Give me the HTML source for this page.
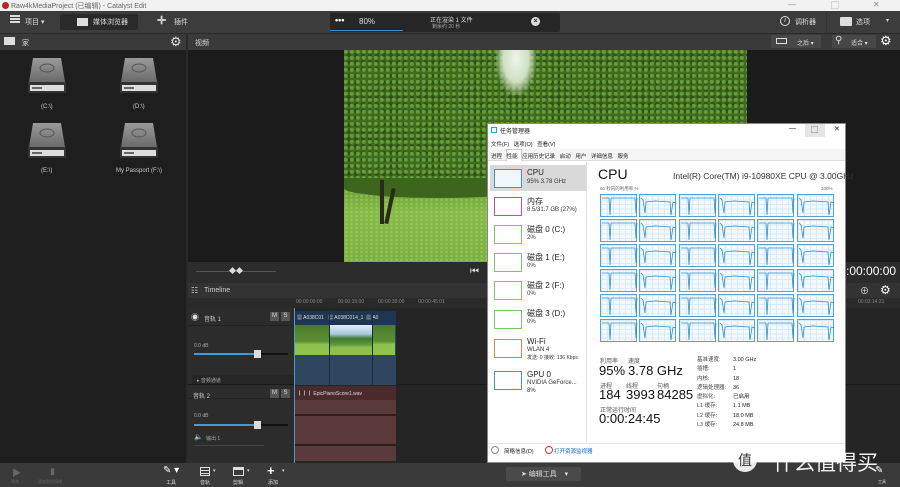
<!DOCTYPE html>
<html><head><meta charset="utf-8"><style>
*{margin:0;padding:0;box-sizing:border-box}
body{width:900px;height:487px;overflow:hidden;background:#1e1e1e;font-family:"Liberation Sans","Noto Sans CJK SC",sans-serif;color:#ccc;position:relative;font-size:7px}
.a{position:absolute}
.tm{color:#222}
.cell{position:absolute;width:37px;height:23px;border:1px solid #4fa3d8;background:#f3f9fd;background-image:linear-gradient(#d8ebf7 1px,transparent 1px),linear-gradient(90deg,#d8ebf7 1px,transparent 1px);background-size:6px 4.5px}
.cell svg{position:absolute;left:0;top:0}
.li{position:absolute;left:494px;width:28px;height:19px;border:1px solid}
.lt{position:absolute;left:527px;font-size:8px;color:#222}
.ls{position:absolute;left:527px;font-size:6px;color:#333}
.sl{position:absolute;font-size:6px;color:#555}
.sv{position:absolute;font-size:13px;color:#111}
</style></head><body>
<!-- title bar -->
<div class="a" style="left:0;top:0;width:900px;height:11px;background:#f2f2f2"></div>
<div class="a" style="left:2px;top:2px;width:7px;height:7px;border-radius:50%;background:#b0282a"></div>
<div class="a" style="left:11px;top:1px;font-size:7px;color:#666">Raw4kMediaProject (已编辑) - Catalyst Edit</div>
<div class="a" style="left:788px;top:0;font-size:8px;color:#888">—</div>
<div class="a" style="left:831px;top:0;font-size:8px;color:#888">▢</div>
<div class="a" style="left:873px;top:0;font-size:8px;color:#888">✕</div>
<!-- toolbar -->
<div class="a" style="left:0;top:11px;width:900px;height:22px;background:#3c3c3c"></div>
<div class="a" style="left:10px;top:15px;width:10px;height:2px;background:#ddd;box-shadow:0 3px 0 #ddd,0 6px 0 #ddd"></div>
<div class="a" style="left:25px;top:17px;font-size:7px;color:#ddd">项目 ▾</div>
<div class="a" style="left:60px;top:14px;width:78px;height:16px;background:#2a2a2a;border-radius:2px"></div>
<div class="a" style="left:77px;top:18px;width:11px;height:8px;background:#ddd"></div>
<div class="a" style="left:93px;top:17px;font-size:7px;color:#ddd">媒体浏览器</div>
<div class="a" style="left:157px;top:14px;font-size:11px;color:#ddd;font-weight:bold">✛</div>
<div class="a" style="left:174px;top:17px;font-size:7px;color:#ddd">插件</div>
<div class="a" style="left:330px;top:13px;width:230px;height:19px;background:#262626;border-radius:2px"></div>
<div class="a" style="left:330px;top:30px;width:73px;height:1px;background:#3a8fc4"></div>
<div class="a" style="left:335px;top:15px;font-size:9px;color:#fff;font-weight:bold">•••</div>
<div class="a" style="left:359px;top:17px;font-size:8px;color:#ddd">80%</div>
<div class="a" style="left:430px;top:15px;font-size:6px;color:#ddd">正在渲染 1 文件</div>
<div class="a" style="left:432px;top:23px;font-size:5px;color:#aaa">剩余约 20 秒</div>
<div class="a" style="left:531px;top:17px;width:9px;height:9px;border-radius:50%;background:#ddd;color:#222;font-size:7px;line-height:9px;text-align:center;font-weight:bold">×</div>
<div class="a" style="left:780px;top:16px;width:10px;height:10px;border-radius:50%;border:1px solid #ddd;color:#ddd;font-size:7px;line-height:8px;text-align:center;font-style:italic">i</div>
<div class="a" style="left:795px;top:17px;font-size:7px;color:#ddd">调析器</div>
<div class="a" style="left:826px;top:11px;width:1px;height:22px;background:#333"></div>
<div class="a" style="left:840px;top:17px;width:12px;height:9px;background:#ddd;border-radius:1px"></div>
<div class="a" style="left:856px;top:17px;font-size:7px;color:#ddd">选项</div>
<div class="a" style="left:886px;top:17px;font-size:6px;color:#ddd">▾</div>
<!-- panel headers -->
<div class="a" style="left:0;top:33px;width:900px;height:17px;background:#3a3a3a;border-top:1px solid #2a2a2a"></div>
<div class="a" style="left:186px;top:33px;width:2px;height:430px;background:#2a2a2a"></div>
<div class="a" style="left:4px;top:37px;width:11px;height:8px;background:#ddd"></div>
<div class="a" style="left:22px;top:38px;font-size:7px;color:#ddd">家</div>
<div class="a" style="left:170px;top:34px;font-size:13px;color:#ddd">⚙</div>
<div class="a" style="left:195px;top:38px;font-size:7px;color:#ddd">视频</div>
<div class="a" style="left:771px;top:35px;width:50px;height:13px;background:#474747"></div>
<div class="a" style="left:776px;top:38px;width:11px;height:6px;border:1px solid #ddd"></div>
<div class="a" style="left:797px;top:38px;font-size:6px;color:#ddd">之后 ▾</div>
<div class="a" style="left:832px;top:35px;width:44px;height:13px;background:#474747"></div>
<div class="a" style="left:835px;top:35px;font-size:10px;color:#ddd">⚲</div>
<div class="a" style="left:851px;top:38px;font-size:6px;color:#ddd">适合 ▾</div>
<div class="a" style="left:880px;top:33px;font-size:13px;color:#fff">⚙</div>
<!-- drives -->
<svg class="a" style="left:0;top:50px" width="186" height="130">
 <defs><linearGradient id="dg" x1="0" y1="0" x2="0" y2="1"><stop offset="0" stop-color="#9a9a9a"/><stop offset="1" stop-color="#6a6a6a"/></linearGradient></defs>
 <g id="d"><path d="M33 8 H61 L65 32 H29 Z" fill="url(#dg)"/><ellipse cx="47" cy="18" rx="7" ry="4" fill="none" stroke="#555" stroke-width="1"/><rect x="28" y="32" width="38" height="11" fill="#333"/><rect x="30" y="35" width="34" height="6" fill="#ddd"/><rect x="32" y="37" width="10" height="2" fill="#666"/></g>
 <use href="#d" x="92"/><use href="#d" y="65"/><use href="#d" x="92" y="65"/>
</svg>
<div class="a" style="left:41px;top:104px;font-size:6px;color:#ccc">(C:\)</div>
<div class="a" style="left:133px;top:104px;font-size:6px;color:#ccc">(D:\)</div>
<div class="a" style="left:41px;top:168px;font-size:6px;color:#ccc">(E:\)</div>
<div class="a" style="left:116px;top:168px;font-size:6px;color:#ccc">My Passport (F:\)</div>
<!-- video -->
<div class="a" style="left:188px;top:50px;width:712px;height:212px;background:#1b1b1b"></div>
<div class="a" style="left:344px;top:50px;width:403px;height:212px;overflow:hidden;background:#3f6c1e">
 <div class="a" style="left:0;top:0;width:403px;height:150px;background-image:radial-gradient(circle at 30% 30%,#6a9d3c 0 1.5px,transparent 2.5px),radial-gradient(circle at 70% 70%,#2d5214 0 1.5px,transparent 2.5px);background-size:6px 6px,7px 7px"></div>
 <div class="a" style="left:152px;top:0;width:40px;height:45px;background:radial-gradient(ellipse at 50% 20%,#eef3ea 0,#cfe0c3 45%,rgba(90,140,60,0) 75%)"></div>
 <div class="a" style="left:0;top:140px;width:403px;height:72px;background:linear-gradient(#6fa33a,#86bb48 30%,#7cb143)"></div>
 <div class="a" style="left:0;top:140px;width:403px;height:72px;background-image:radial-gradient(circle,#a2cf62 0 1px,transparent 1.5px);background-size:5px 4px;opacity:.6"></div>
 <div class="a" style="left:0;top:128px;width:190px;height:20px;background:#3b661c;border-radius:0 0 50% 50%"></div>
 <div class="a" style="left:36px;top:130px;width:4px;height:44px;background:#2b2a1a"></div>
 <div class="a" style="left:44px;top:138px;width:4px;height:36px;background:#2b2a1a;transform:rotate(12deg)"></div>
</div>
<!-- transport -->
<div class="a" style="left:188px;top:262px;width:712px;height:21px;background:#2c2c2c"></div>
<div class="a" style="left:196px;top:271px;width:80px;height:1px;background:#555"></div>
<div class="a" style="left:229px;top:266px;font-size:7px;color:#ddd">◆◆</div>
<div class="a" style="left:470px;top:266px;font-size:10px;color:#ddd">⏮</div>
<div class="a" style="left:846px;top:264px;font-size:12px;color:#fff">:00:00:00</div>
<!-- timeline header -->
<div class="a" style="left:188px;top:283px;width:712px;height:15px;background:#333"></div>
<div class="a" style="left:191px;top:286px;font-size:8px;color:#ccc">☷</div>
<div class="a" style="left:204px;top:287px;font-size:7px;color:#ccc">Timeline</div>
<div class="a" style="left:860px;top:284px;font-size:9px;color:#ddd">⊕</div>
<div class="a" style="left:880px;top:283px;font-size:12px;color:#fff">⚙</div>
<div class="a" style="left:188px;top:298px;width:712px;height:10px;background:#2a2a2a"></div>
<div class="a" style="left:296px;top:299px;font-size:5px;color:#888;white-space:nowrap">00:00:00:00 &nbsp;&nbsp;&nbsp;&nbsp;&nbsp;&nbsp;&nbsp;&nbsp;&nbsp; 00:00:15:00 &nbsp;&nbsp;&nbsp;&nbsp;&nbsp;&nbsp;&nbsp;&nbsp; 00:00:30:00 &nbsp;&nbsp;&nbsp;&nbsp;&nbsp;&nbsp;&nbsp;&nbsp; 00:00:45:01</div>
<div class="a" style="left:858px;top:299px;font-size:5px;color:#888">00:03:14:21</div>
<!-- tracks -->
<div class="a" style="left:188px;top:308px;width:106px;height:155px;background:#2c2c2c"></div>
<div class="a" style="left:294px;top:308px;width:606px;height:155px;background:#252525"></div>
<div class="a" style="left:188px;top:384px;width:712px;height:1px;background:#1a1a1a"></div>
<div class="a" style="left:188px;top:325px;width:106px;height:1px;background:#222"></div>
<div class="a" style="left:188px;top:398px;width:106px;height:1px;background:#222"></div>
<div class="a" style="left:191px;top:312px;font-size:8px;color:#ddd">◉</div>
<div class="a" style="left:204px;top:314px;font-size:6px;color:#ccc">音轨 1</div>
<div class="a" style="left:270px;top:312px;width:9px;height:9px;background:#555;color:#ddd;font-size:6px;text-align:center;line-height:9px">M</div>
<div class="a" style="left:281px;top:312px;width:9px;height:9px;background:#555;color:#ddd;font-size:6px;text-align:center;line-height:9px">S</div>
<div class="a" style="left:194px;top:343px;font-size:5px;color:#aaa">0.0 dB</div>
<div class="a" style="left:194px;top:353px;width:64px;height:2px;background:#3a9be0"></div>
<div class="a" style="left:258px;top:353px;width:30px;height:2px;background:#111"></div>
<div class="a" style="left:254px;top:350px;width:7px;height:8px;background:#ddd"></div>
<div class="a" style="left:192px;top:375px;width:102px;height:9px;background:#262626"></div>
<div class="a" style="left:197px;top:377px;font-size:5px;color:#aaa">▸ 音频通道</div>
<div class="a" style="left:193px;top:391px;font-size:6px;color:#ccc">音轨 2</div>
<div class="a" style="left:270px;top:389px;width:9px;height:9px;background:#555;color:#ddd;font-size:6px;text-align:center;line-height:9px">M</div>
<div class="a" style="left:281px;top:389px;width:9px;height:9px;background:#555;color:#ddd;font-size:6px;text-align:center;line-height:9px">S</div>
<div class="a" style="left:194px;top:413px;font-size:5px;color:#aaa">0.0 dB</div>
<div class="a" style="left:194px;top:424px;width:64px;height:2px;background:#3a9be0"></div>
<div class="a" style="left:258px;top:424px;width:30px;height:2px;background:#111"></div>
<div class="a" style="left:254px;top:421px;width:7px;height:8px;background:#ddd"></div>
<div class="a" style="left:194px;top:433px;font-size:7px;color:#ddd">🔈</div>
<div class="a" style="left:206px;top:435px;font-size:5px;color:#aaa">输出 1</div>
<div class="a" style="left:194px;top:445px;width:70px;height:1px;background:#444"></div>
<!-- video clips -->
<div class="a" style="left:294px;top:308px;width:1px;height:155px;background:#4a9ad0"></div>
<div class="a" style="left:295px;top:311px;width:101px;height:74px;background:#2e465e"></div>
<div class="a" style="left:295px;top:311px;width:101px;height:14px;background:#1f3650"></div>
<div class="a" style="left:297px;top:314px;font-size:5px;color:#ddd;white-space:nowrap">▦ A038C01 &nbsp; ▦ A038C014_1 &nbsp;▦ A0</div>
<div class="a" style="left:295px;top:325px;width:34px;height:30px;background:linear-gradient(#4a7c28 0%,#5b8f34 55%,#8fc24e 65%)"></div>
<div class="a" style="left:330px;top:325px;width:42px;height:30px;background:linear-gradient(#dfeef8 0%,#a9c9e2 30%,#3f7a2c 45%,#5e963a 65%,#8fbf4e 75%)"></div>
<div class="a" style="left:373px;top:325px;width:22px;height:30px;background:linear-gradient(#4a7c28 0%,#5b8f34 55%,#8fc24e 65%)"></div>
<div class="a" style="left:329px;top:311px;width:1px;height:74px;background:#1a2a3a"></div>
<div class="a" style="left:372px;top:311px;width:1px;height:74px;background:#1a2a3a"></div>
<!-- audio clip -->
<div class="a" style="left:295px;top:386px;width:101px;height:75px;background:#5a3a3a"></div>
<div class="a" style="left:295px;top:386px;width:101px;height:14px;background:#4a2a2a"></div>
<div class="a" style="left:297px;top:390px;font-size:5px;color:#ddd">┃┃┃ EpicPianoScore1.wav</div>
<div class="a" style="left:295px;top:414px;width:101px;height:2px;background:#2f1c1c"></div>
<div class="a" style="left:295px;top:444px;width:101px;height:2px;background:#2f1c1c"></div>
<!-- bottom toolbar -->
<div class="a" style="left:0;top:463px;width:900px;height:24px;background:#3a3a3a"></div>
<div class="a" style="left:12px;top:466px;font-size:9px;color:#666">▶</div>
<div class="a" style="left:11px;top:479px;font-size:4px;color:#666">预览</div>
<div class="a" style="left:50px;top:466px;font-size:9px;color:#666">▮</div>
<div class="a" style="left:38px;top:479px;font-size:4px;color:#666">添加到时间线</div>
<div class="a" style="left:163px;top:465px;font-size:10px;color:#fff">✎ ▾</div>
<div class="a" style="left:166px;top:479px;font-size:5px;color:#ddd">工具</div>
<div class="a" style="left:200px;top:467px;width:10px;height:9px;border:1px solid #ddd;background:repeating-linear-gradient(#3a3a3a 0 2px,#ddd 2px 3px)"></div>
<div class="a" style="left:213px;top:468px;font-size:5px;color:#ddd">▾</div>
<div class="a" style="left:200px;top:479px;font-size:5px;color:#ddd">音轨</div>
<div class="a" style="left:233px;top:467px;width:11px;height:9px;border:1px solid #ddd;border-top:3px solid #ddd"></div>
<div class="a" style="left:247px;top:468px;font-size:5px;color:#ddd">▾</div>
<div class="a" style="left:233px;top:479px;font-size:5px;color:#ddd">剪辑</div>
<div class="a" style="left:267px;top:463px;font-size:13px;color:#fff;font-weight:bold">+</div>
<div class="a" style="left:282px;top:468px;font-size:5px;color:#ddd">▾</div>
<div class="a" style="left:268px;top:479px;font-size:5px;color:#ddd">添加</div>
<div class="a" style="left:506px;top:467px;width:75px;height:14px;background:#4a4a4a;border-radius:2px"></div>
<div class="a" style="left:521px;top:469px;font-size:7px;color:#ddd">➤ 编辑工具 &nbsp;&nbsp;&nbsp;▾</div>
<div class="a" style="left:875px;top:465px;font-size:10px;color:#fff">✎</div>
<div class="a" style="left:878px;top:479px;font-size:4px;color:#ddd">工具</div>
<!-- task manager -->
<div class="a" style="left:487px;top:123px;width:359px;height:340px;background:#fff;border:1px solid #888"></div>
<div class="a" style="left:491px;top:127px;width:6px;height:6px;border:1px solid #39c"></div>
<div class="a tm" style="left:500px;top:126px;font-size:6px">任务管理器</div>
<div class="a tm" style="left:789px;top:125px;font-size:7px">—</div>
<div class="a" style="left:805px;top:124px;width:20px;height:13px;background:#e5e5e5"></div>
<div class="a tm" style="left:811px;top:125px;font-size:7px">▢</div>
<div class="a tm" style="left:834px;top:125px;font-size:7px">✕</div>
<div class="a tm" style="left:491px;top:140px;font-size:5.5px;white-space:nowrap">文件(F) &nbsp; 选项(O) &nbsp; 查看(V)</div>
<div class="a" style="left:488px;top:149px;width:357px;height:12px;background:#f5f5f5;border-bottom:1px solid #ddd"></div>
<div class="a" style="left:506px;top:149px;width:16px;height:12px;background:#fff;border:1px solid #ccc;border-bottom:none"></div>
<div class="a tm" style="left:491px;top:152px;font-size:5.5px;white-space:nowrap">进程 &nbsp; 性能 &nbsp; 应用历史记录 &nbsp; 启动 &nbsp; 用户 &nbsp; 详细信息 &nbsp; 服务</div>
<div class="a" style="left:586px;top:162px;width:1px;height:280px;background:#e0e0e0"></div>
<div class="a" style="left:490px;top:165px;width:96px;height:26px;background:#d9d9d9"></div>
<div class="li" style="top:169px;border-color:#3a97d0;background:#f0f7fc"></div>
<div class="lt" style="top:168px">CPU</div><div class="ls" style="top:179px">95% 3.78 GHz</div>
<div class="li" style="top:197px;border-color:#b24fc8"></div>
<div class="lt" style="top:196px">内存</div><div class="ls" style="top:207px">8.5/31.7 GB (27%)</div>
<div class="li" style="top:225px;border-color:#7ec46a"></div>
<div class="lt" style="top:224px">磁盘 0 (C:)</div><div class="ls" style="top:235px">2%</div>
<div class="li" style="top:253px;border-color:#7ec46a"></div>
<div class="lt" style="top:252px">磁盘 1 (E:)</div><div class="ls" style="top:263px">0%</div>
<div class="li" style="top:281px;border-color:#7ec46a"></div>
<div class="lt" style="top:280px">磁盘 2 (F:)</div><div class="ls" style="top:291px">0%</div>
<div class="li" style="top:310px;border-color:#7ec46a"></div>
<div class="lt" style="top:308px">磁盘 3 (D:)</div><div class="ls" style="top:319px">0%</div>
<div class="li" style="top:339px;border-color:#d08a4a"></div>
<div class="lt" style="top:337px">Wi-Fi</div><div class="ls" style="top:347px">WLAN 4</div><div class="ls" style="top:354px;font-size:5px">发送: 0 接收: 136 Kbps</div>
<div class="li" style="top:371px;border-color:#3a97d0"></div>
<div class="lt" style="top:370px">GPU 0</div><div class="ls" style="top:380px">NVIDIA GeForce...</div><div class="ls" style="top:388px">8%</div>
<div class="a" style="left:598px;top:166px;font-size:14px;color:#111">CPU</div>
<div class="a" style="left:673px;top:171px;font-size:8.5px;color:#333;white-space:nowrap">Intel(R) Core(TM) i9-10980XE CPU @ 3.00GHz</div>
<div class="a" style="left:600px;top:186px;font-size:4.5px;color:#666">60 秒内的利用率 %</div>
<div class="a" style="left:821px;top:186px;font-size:4.5px;color:#666">100%</div>
<div id="grid"></div>
<div class="sl" style="left:600px;top:356px">利用率</div><div class="sl" style="left:628px;top:356px">速度</div>
<div class="sv" style="left:599px;top:363px">95%</div><div class="sv" style="left:628px;top:363px">3.78 GHz</div>
<div class="sl" style="left:600px;top:381px">进程</div><div class="sl" style="left:626px;top:381px">线程</div><div class="sl" style="left:657px;top:381px">句柄</div>
<div class="sv" style="left:599px;top:387px">184</div><div class="sv" style="left:626px;top:387px">3993</div><div class="sv" style="left:657px;top:387px">84285</div>
<div class="sl" style="left:600px;top:405px">正常运行时间</div>
<div class="sv" style="left:599px;top:411px">0:00:24:45</div>
<div class="a" style="left:697px;top:356px;font-size:5.5px;color:#444;line-height:9.3px">基准速度:<br>插槽:<br>内核:<br>逻辑处理器:<br>虚拟化:<br>L1 缓存:<br>L2 缓存:<br>L3 缓存:</div>
<div class="a" style="left:733px;top:356px;font-size:5.5px;color:#222;line-height:9.3px">3.00 GHz<br>1<br>18<br>36<br>已启用<br>1.1 MB<br>18.0 MB<br>24.8 MB</div>
<div class="a" style="left:488px;top:443px;width:357px;height:1px;background:#e5e5e5"></div>
<div class="a" style="left:491px;top:446px;width:8px;height:8px;border-radius:50%;border:1px solid #888"></div>
<div class="a tm" style="left:504px;top:447px;font-size:5.5px">简略信息(D)</div>
<div class="a" style="left:545px;top:446px;width:8px;height:8px;border-radius:50%;border:1px solid #c33"></div>
<div class="a" style="left:554px;top:447px;font-size:5.5px;color:#06c">打开资源监视器</div>
<!-- watermark -->
<div class="a" style="left:733px;top:448px;width:24px;height:24px;border-radius:50%;background:rgba(255,255,255,.9);color:#333;font-size:14px;text-align:center;line-height:24px">值</div>
<div class="a" style="left:773px;top:447px;font-size:21px;color:rgba(255,255,255,.92);white-space:nowrap">什么值得买</div>
<script>
var g=document.getElementById('grid'),h='';
for(var r=0;r<6;r++)for(var c=0;c<6;c++){
 var x=600+c*39.3,y=194+r*25;
 var p=c%2==0?'M1 3 L8 3 L9 20 L10 3 L34 3 L35 18 L36 3':'M1 3 L3 5 L5 18 L6 7 L15 6 L30 7 L31 20 L33 7 L36 8';
 h+='<div class="cell" style="left:'+x+'px;top:'+y+'px"><svg width="37" height="23"><path d="'+p+'" fill="none" stroke="#2f8fcf" stroke-width="0.8"/></svg></div>';
}
g.innerHTML=h;
</script>
</body></html>
